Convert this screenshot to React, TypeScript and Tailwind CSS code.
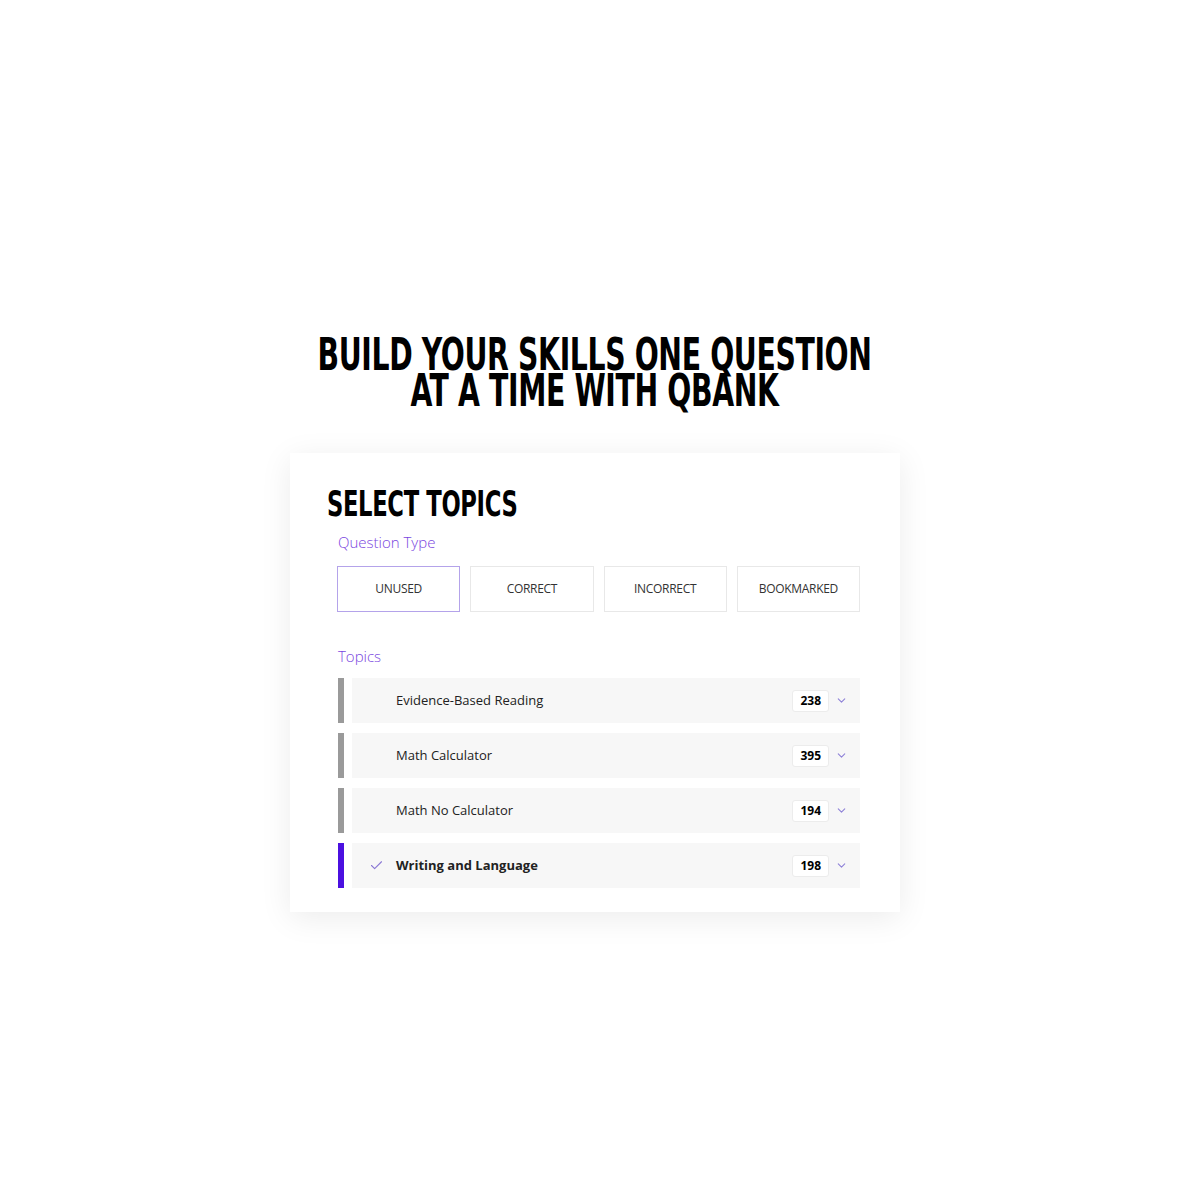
import { Check, ChevronDown } from "lucide-react";

const TYPES = ["UNUSED", "CORRECT", "INCORRECT", "BOOKMARKED"];

const TOPICS = [
  { name: "Evidence-Based Reading", count: 238, active: false },
  { name: "Math Calculator", count: 395, active: false },
  { name: "Math No Calculator", count: 194, active: false },
  { name: "Writing and Language", count: 198, active: true },
];

const condensed = { fontFamily: '"DejaVu Sans Condensed", "DejaVu Sans", sans-serif' };
const body = { fontFamily: '"Open Sans", "Liberation Sans", sans-serif' };

export default function App() {
  return (
    <div className="min-h-[1200px] w-[1200px] bg-white pr-[10px] pt-[337px]" style={body}>
      <div className="flex flex-col items-center">
        {/* 헤드라인 */}
        <h1
          className="origin-center scale-x-[0.715] text-center text-[44px] font-bold leading-[36px] tracking-[-0.5px] whitespace-nowrap text-black"
          style={condensed}
        >
          BUILD YOUR SKILLS ONE QUESTION
          <br />
          AT A TIME WITH QBANK
        </h1>

        <div className="mt-[44px] flex w-[610px] flex-col bg-white pb-[24px] pl-[37px] pr-[40px] pt-[33px] shadow-[0_6px_30px_rgba(0,0,0,0.08)]">
          <div className="h-[36px] overflow-visible">
            <h2
              className="origin-left scale-x-[0.70] text-[36px] font-bold leading-[36px] tracking-[-0.5px] whitespace-nowrap text-black"
              style={condensed}
            >
              SELECT TOPICS
            </h2>
          </div>

          <p className="mt-[10px] pl-[11px] text-[15px] font-light leading-[20px] text-[#7a45e0]">Question Type</p>

          <div className="mt-[14px] grid grid-cols-4 gap-[10px] pl-[10px]">
            {TYPES.map((t, i) => (
              <button
                key={t}
                type="button"
                className={`h-[46px] border bg-white text-[12px] tracking-tight text-[#333] ${
                  i === 0 ? "border-[#b4a3ea]" : "border-[#e8e8e8]"
                }`}
              >
                {t}
              </button>
            ))}
          </div>

          <p className="mt-[34px] pl-[11px] text-[15px] font-light leading-[20px] text-[#7a45e0]">Topics</p>

          <div className="mt-[12px] flex flex-col gap-[10px] pl-[11px]">
            {TOPICS.map((t) => (
              <div key={t.name} className="flex h-[45px] items-stretch gap-[8px]">
                <div className={`w-[6px] ${t.active ? "bg-[#4b10e0]" : "bg-[#9a9a9a]"}`} />
                <div className="flex flex-1 items-center bg-[#f7f7f7] pr-[12px]">
                  <div className="flex w-[44px] justify-end pr-[12px]">
                    {t.active && <Check className="h-[15px] w-[15px] text-[#8a78d4]" strokeWidth={1.75} />}
                  </div>
                  <span
                    className={`flex-1 text-[13px] text-[#222] ${t.active ? "font-bold" : "font-normal"}`}
                  >
                    {t.name}
                  </span>
                  <span className="rounded-[3px] border border-[#ececec] bg-white px-[7px] py-[1px] text-[12px] font-bold text-black">
                    {t.count}
                  </span>
                  <ChevronDown className="ml-[6px] h-[13px] w-[13px] text-[#8f82d8]" strokeWidth={2} />
                </div>
              </div>
            ))}
          </div>
        </div>
      </div>
    </div>
  );
}
